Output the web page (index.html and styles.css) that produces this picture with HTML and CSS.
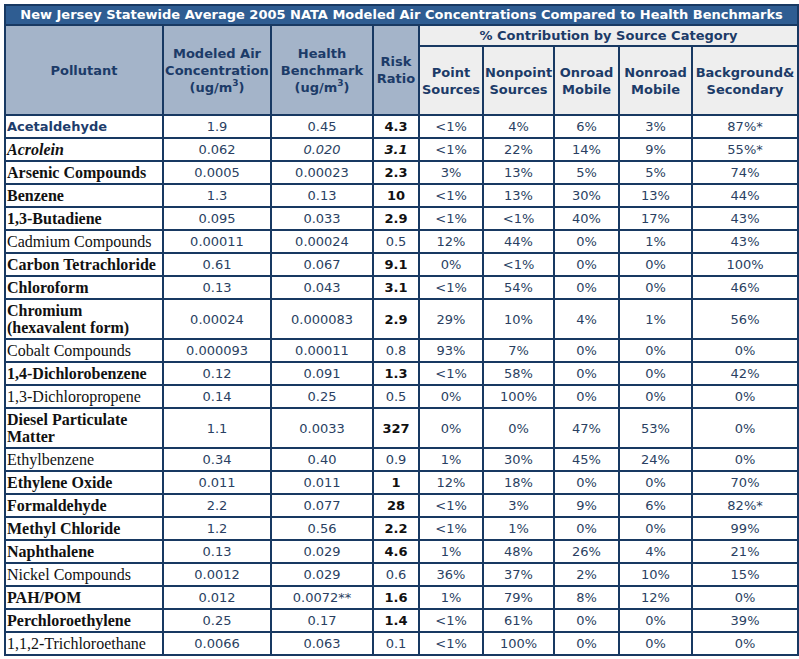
FILE: index.html
```html
<!DOCTYPE html>
<html>
<head>
<meta charset="utf-8">
<title>NATA 2005</title>
<link rel="stylesheet" href="styles.css">
</head>
<body>
<table class="nata">
  <colgroup>
    <col class="c-pol"><col class="c-mod"><col class="c-hb"><col class="c-risk">
    <col class="c-pt"><col class="c-np"><col class="c-on"><col class="c-nr"><col class="c-bg">
  </colgroup>
  <thead>
    <tr><th colspan="9" class="title">New Jersey Statewide Average 2005 NATA Modeled Air Concentrations Compared to Health Benchmarks</th></tr>
    <tr>
      <th rowspan="2" class="hd">Pollutant</th>
      <th rowspan="2" class="hd">Modeled Air<br>Concentration<br>(ug/m<sup>3</sup>)</th>
      <th rowspan="2" class="hd">Health<br>Benchmark<br>(ug/m<sup>3</sup>)</th>
      <th rowspan="2" class="hd">Risk<br>Ratio</th>
      <th colspan="5" class="hl group">% Contribution by Source Category</th>
    </tr>
    <tr class="subrow">
      <th class="hl">Point<br>Sources</th>
      <th class="hl">Nonpoint<br>Sources</th>
      <th class="hl">Onroad<br>Mobile</th>
      <th class="hl">Nonroad<br>Mobile</th>
      <th class="hl">Background&amp;<br>Secondary</th>
    </tr>
  </thead>
  <tbody>
    <tr><td class="nm nv">Acetaldehyde</td><td>1.9</td><td>0.45</td><td class="rb">4.3</td><td>&lt;1%</td><td>4%</td><td>6%</td><td>3%</td><td>87%*</td></tr>
    <tr><td class="nm nbi">Acrolein</td><td>0.062</td><td class="it">0.020</td><td class="rb it">3.1</td><td>&lt;1%</td><td>22%</td><td>14%</td><td>9%</td><td>55%*</td></tr>
    <tr><td class="nm nb">Arsenic Compounds</td><td>0.0005</td><td>0.00023</td><td class="rb">2.3</td><td>3%</td><td>13%</td><td>5%</td><td>5%</td><td>74%</td></tr>
    <tr><td class="nm nb">Benzene</td><td>1.3</td><td>0.13</td><td class="rb">10</td><td>&lt;1%</td><td>13%</td><td>30%</td><td>13%</td><td>44%</td></tr>
    <tr><td class="nm nb">1,3-Butadiene</td><td>0.095</td><td>0.033</td><td class="rb">2.9</td><td>&lt;1%</td><td>&lt;1%</td><td>40%</td><td>17%</td><td>43%</td></tr>
    <tr><td class="nm nr">Cadmium Compounds</td><td>0.00011</td><td>0.00024</td><td>0.5</td><td>12%</td><td>44%</td><td>0%</td><td>1%</td><td>43%</td></tr>
    <tr><td class="nm nb">Carbon Tetrachloride</td><td>0.61</td><td>0.067</td><td class="rb">9.1</td><td>0%</td><td>&lt;1%</td><td>0%</td><td>0%</td><td>100%</td></tr>
    <tr><td class="nm nb">Chloroform</td><td>0.13</td><td>0.043</td><td class="rb">3.1</td><td>&lt;1%</td><td>54%</td><td>0%</td><td>0%</td><td>46%</td></tr>
    <tr><td class="nm nb">Chromium<br>(hexavalent form)</td><td>0.00024</td><td>0.000083</td><td class="rb">2.9</td><td>29%</td><td>10%</td><td>4%</td><td>1%</td><td>56%</td></tr>
    <tr><td class="nm nr">Cobalt Compounds</td><td>0.000093</td><td>0.00011</td><td>0.8</td><td>93%</td><td>7%</td><td>0%</td><td>0%</td><td>0%</td></tr>
    <tr><td class="nm nb">1,4-Dichlorobenzene</td><td>0.12</td><td>0.091</td><td class="rb">1.3</td><td>&lt;1%</td><td>58%</td><td>0%</td><td>0%</td><td>42%</td></tr>
    <tr><td class="nm nr">1,3-Dichloropropene</td><td>0.14</td><td>0.25</td><td>0.5</td><td>0%</td><td>100%</td><td>0%</td><td>0%</td><td>0%</td></tr>
    <tr><td class="nm nb">Diesel Particulate<br>Matter</td><td>1.1</td><td>0.0033</td><td class="rb">327</td><td>0%</td><td>0%</td><td>47%</td><td>53%</td><td>0%</td></tr>
    <tr><td class="nm nr">Ethylbenzene</td><td>0.34</td><td>0.40</td><td>0.9</td><td>1%</td><td>30%</td><td>45%</td><td>24%</td><td>0%</td></tr>
    <tr><td class="nm nb">Ethylene Oxide</td><td>0.011</td><td>0.011</td><td class="rb">1</td><td>12%</td><td>18%</td><td>0%</td><td>0%</td><td>70%</td></tr>
    <tr><td class="nm nb">Formaldehyde</td><td>2.2</td><td>0.077</td><td class="rb">28</td><td>&lt;1%</td><td>3%</td><td>9%</td><td>6%</td><td>82%*</td></tr>
    <tr><td class="nm nb">Methyl Chloride</td><td>1.2</td><td>0.56</td><td class="rb">2.2</td><td>&lt;1%</td><td>1%</td><td>0%</td><td>0%</td><td>99%</td></tr>
    <tr><td class="nm nb">Naphthalene</td><td>0.13</td><td>0.029</td><td class="rb">4.6</td><td>1%</td><td>48%</td><td>26%</td><td>4%</td><td>21%</td></tr>
    <tr><td class="nm nr">Nickel Compounds</td><td>0.0012</td><td>0.029</td><td>0.6</td><td>36%</td><td>37%</td><td>2%</td><td>10%</td><td>15%</td></tr>
    <tr><td class="nm nb">PAH/POM</td><td>0.012</td><td>0.0072**</td><td class="rb">1.6</td><td>1%</td><td>79%</td><td>8%</td><td>12%</td><td>0%</td></tr>
    <tr><td class="nm nb">Perchloroethylene</td><td>0.25</td><td>0.17</td><td class="rb">1.4</td><td>&lt;1%</td><td>61%</td><td>0%</td><td>0%</td><td>39%</td></tr>
    <tr><td class="nm nr">1,1,2-Trichloroethane</td><td>0.0066</td><td>0.063</td><td>0.1</td><td>&lt;1%</td><td>100%</td><td>0%</td><td>0%</td><td>0%</td></tr>
  </tbody>
</table>
</body>
</html>
```

FILE: styles.css
```css
html, body {
  margin: 0;
  padding: 0;
  background: #ffffff;
}

body {
  padding: 4px 2px 0 4px;
}

.nata {
  border-collapse: collapse;
  table-layout: fixed;
  width: 793px;
  font-family: "DejaVu Sans", Verdana, sans-serif;
  font-size: 13px;
  color: #2a3f62;
  border: 2px solid #183962;
}

.c-pol { width: 158px; }
.c-mod { width: 108px; }
.c-hb { width: 102px; }
.c-risk { width: 46px; }
.c-pt { width: 64px; }
.c-np { width: 71px; }
.c-on { width: 65px; }
.c-nr { width: 73px; }
.c-bg { width: 106px; }

.nata th,
.nata td {
  border: 2px solid #183962;
  text-align: center;
  vertical-align: middle;
}

.nata th {
  font-weight: bold;
  color: #1c3b68;
  line-height: 17px;
  padding: 0 1px;
  white-space: nowrap;
}

.nata th.title {
  background: #2f5d92;
  color: #ffffff;
  line-height: 16px;
  padding: 1px 0 1px;
}

.nata th.hd {
  background: #a4b4c9;
}

.nata th.hl {
  background: #eeeeee;
}

.nata th.group {
  line-height: 17px;
  padding: 1px 0 1px;
}

.subrow {
  height: 69px;
}

.nata sup {
  font-size: 9px;
  line-height: 0;
  vertical-align: 6px;
}

.nata td {
  padding: 2px 2px 2px;
  line-height: 17px;
  white-space: nowrap;
}

.nata td.nm {
  text-align: left;
  padding-left: 1px;
  font-family: "Liberation Serif", "Times New Roman", serif;
  font-size: 16px;
  color: #111111;
}

.nata td.nv {
  font-family: "DejaVu Sans", Verdana, sans-serif;
  font-size: 13px;
  font-weight: bold;
  color: #1e3d6c;
}

.nata td.nb {
  font-weight: bold;
}

.nata td.nbi {
  font-weight: bold;
  font-style: italic;
}

.nata td.nr {
  font-weight: normal;
}

.nata td.rb {
  font-weight: bold;
  color: #111111;
}

.nata td.it {
  font-style: italic;
}
```
